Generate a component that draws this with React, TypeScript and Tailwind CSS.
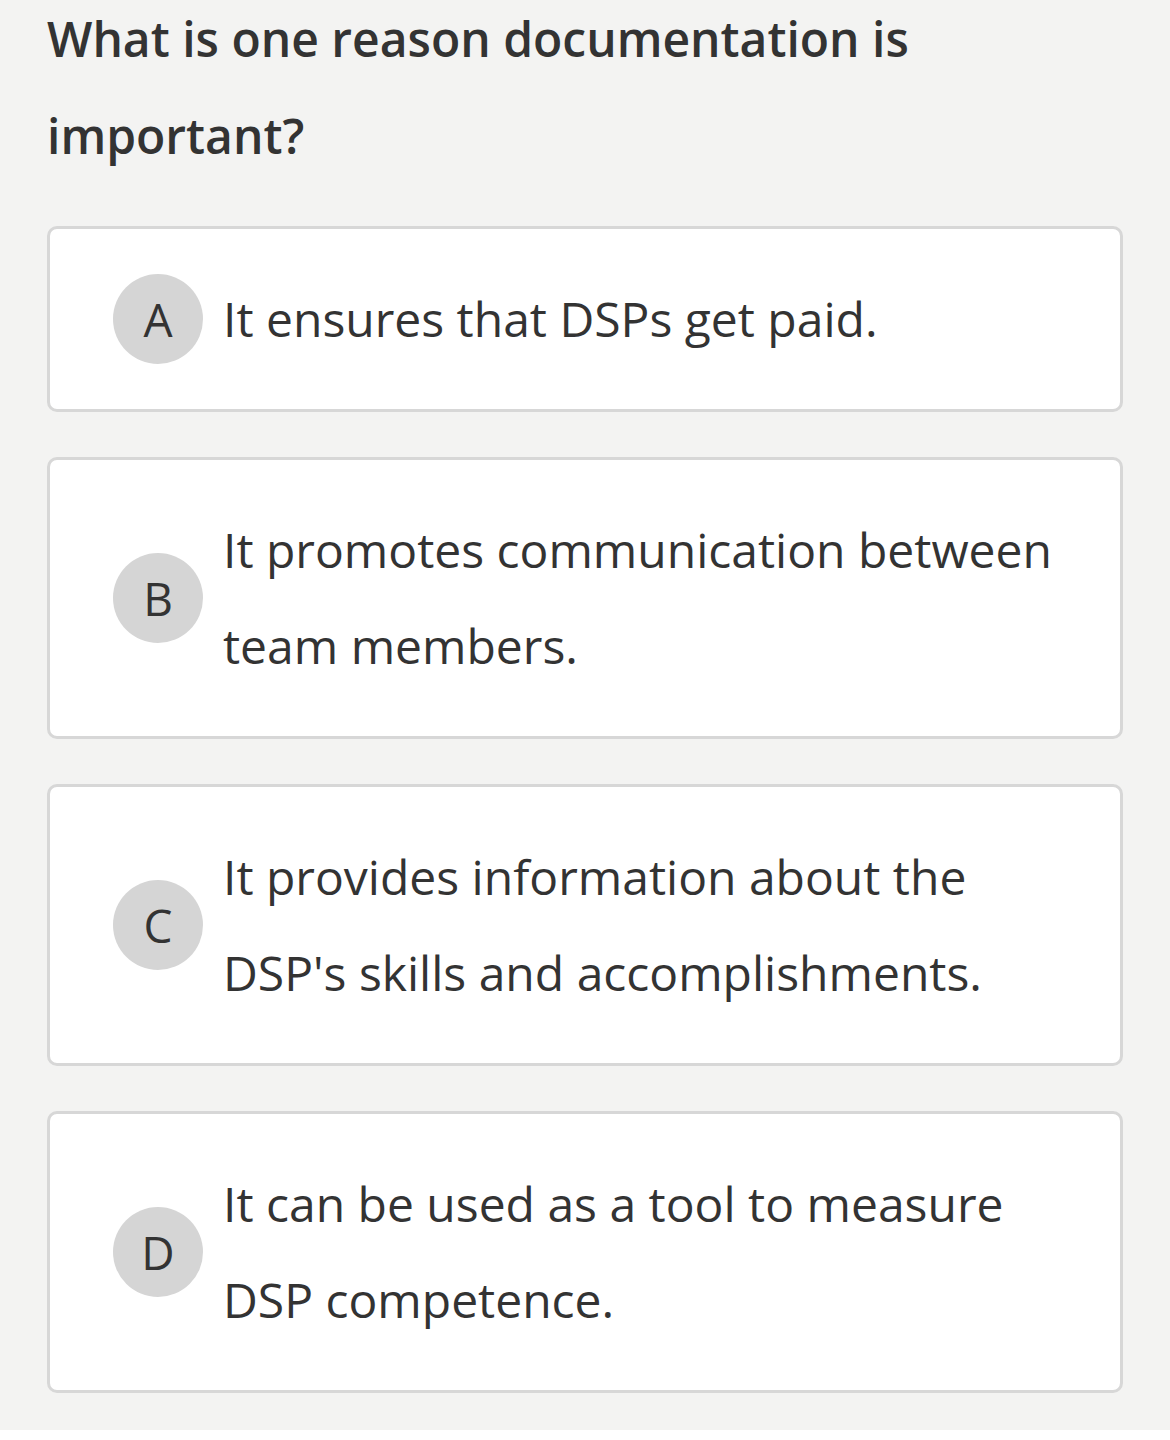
const options = [
  { letter: 'A', text: 'It ensures that DSPs get paid.' },
  { letter: 'B', text: 'It promotes communication between team members.' },
  { letter: 'C', text: "It provides information about the DSP's skills and accomplishments." },
  { letter: 'D', text: 'It can be used as a tool to measure DSP competence.' },
];

export default function App() {
  return (
    <main
      className="min-h-[1440px] bg-[#f3f3f2] px-[47px] text-[#333333]"
      style={{ fontFamily: '"Open Sans", "Noto Sans", sans-serif' }}
    >
      <h1 className="-mt-[10px] text-[48px] font-semibold leading-[97px]">
        What is one reason documentation is important?
      </h1>

      <div className="mt-[42px] flex flex-col gap-[45px]">
        {options.map((o) => (
          <div
            key={o.letter}
            className="flex items-center gap-[20px] rounded-[10px] border-[3px] border-[#d7d7d7] bg-white py-[42px] pl-[63px] pr-[60px]"
          >
            <div className="flex h-[90px] w-[90px] shrink-0 items-center justify-center rounded-full bg-[#d5d5d5] text-[46px] leading-none">
              {o.letter}
            </div>
            <p className="text-[48px] leading-[96px]">{o.text}</p>
          </div>
        ))}
      </div>
    </main>
  );
}
